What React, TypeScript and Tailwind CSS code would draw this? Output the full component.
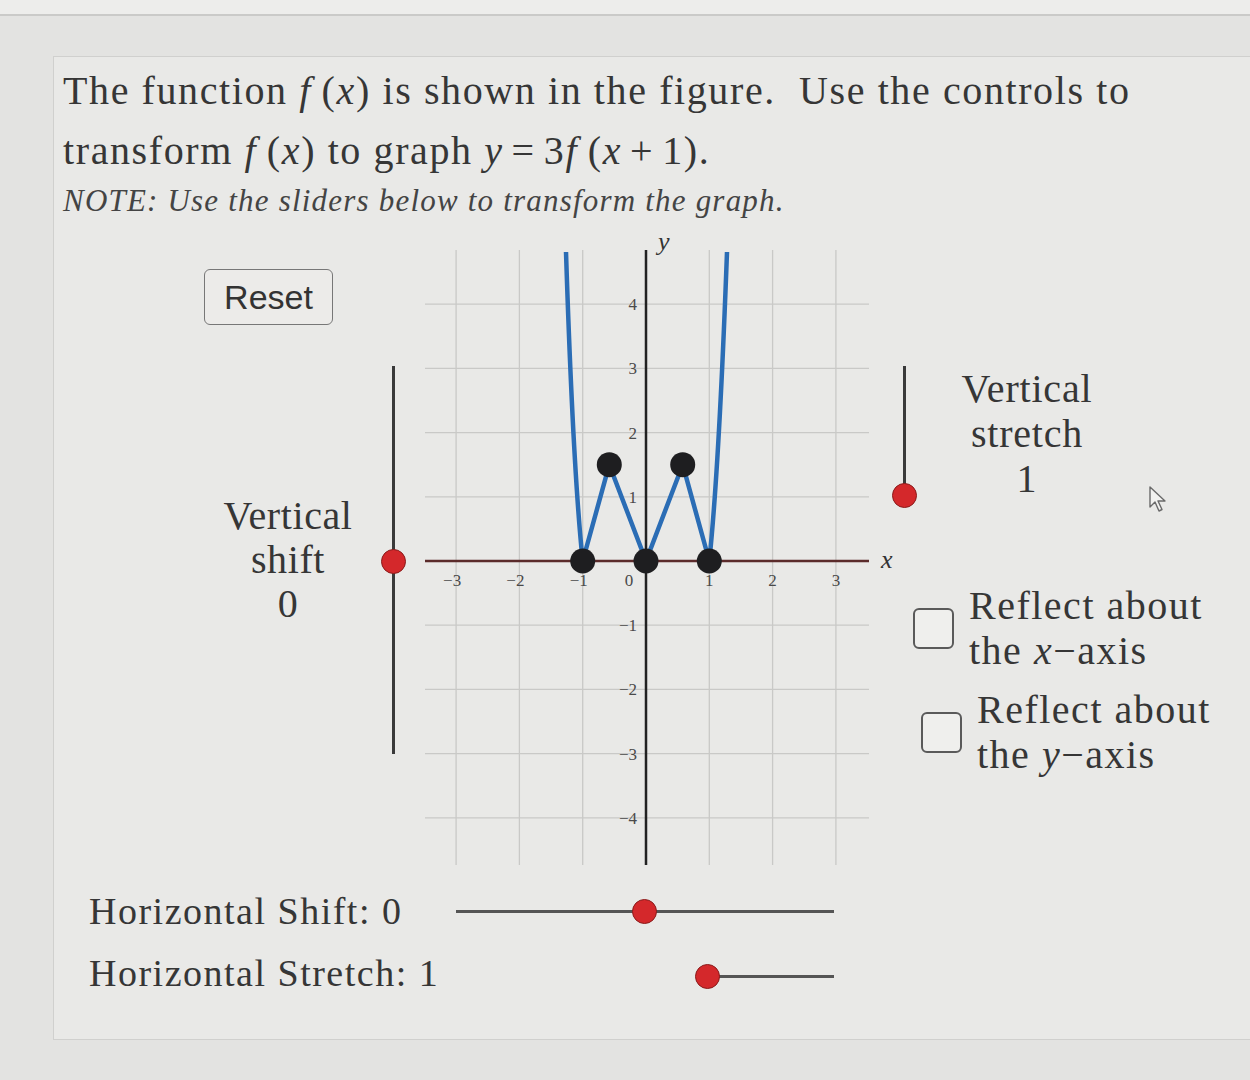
import React from "react";

const serif = { fontFamily: '"Liberation Serif", "Times New Roman", serif' };

function Graph() {
  const ox = 225;
  const oy = 333;
  const ux = 63.3;
  const uy = 64.2;
  const xs = [-3, -2, -1, 0, 1, 2, 3];
  const ys = [-4, -3, -2, -1, 0, 1, 2, 3, 4];
  const pts: [number, number][] = [
    [-1, 0],
    [-0.58, 1.5],
    [0, 0],
    [0.58, 1.5],
    [1, 0],
  ];
  const P = (x: number, y: number) => [ox + x * ux, oy - y * uy];
  return (
    <svg width="471" height="640" viewBox="0 0 471 640" className="overflow-visible" style={serif}>
      {xs.map((k) => (
        <line key={"gx" + k} x1={ox + k * ux} y1={22} x2={ox + k * ux} y2={637} stroke="#c9c9c7" strokeWidth="1.3" />
      ))}
      {ys.map((k) => (
        <line key={"gy" + k} x1={4} y1={oy - k * uy} x2={448} y2={oy - k * uy} stroke="#c9c9c7" strokeWidth="1.3" />
      ))}
      <line x1={4} y1={oy} x2={448} y2={oy} stroke="#5b2b2b" strokeWidth="2.5" />
      <line x1={ox} y1={22} x2={ox} y2={637} stroke="#222" strokeWidth="2.5" />
      {xs.map((k) =>
        k === 0 ? (
          <text key={"tx" + k} x={ox - 17} y={oy + 25} fontSize="17" fill="#4a4a4a" textAnchor="middle">0</text>
        ) : (
          <text key={"tx" + k} x={ox + k * ux - (k < 0 ? 4 : 0)} y={oy + 25} fontSize="17" fill="#4a4a4a" textAnchor="middle">
            {k < 0 ? "\u2212" + -k : k}
          </text>
        )
      )}
      {ys
        .filter((k) => k !== 0)
        .map((k) => (
          <text key={"ty" + k} x={ox - 9} y={oy - k * uy + 6} fontSize="17" fill="#4a4a4a" textAnchor="end">
            {k < 0 ? "\u2212" + -k : k}
          </text>
        ))}
      <text x={ox + 12} y={22} fontSize="26" fontStyle="italic" fill="#333">y</text>
      <text x={460} y={340} fontSize="26" fontStyle="italic" fill="#333">x</text>
      <path
        d={`M145 24 Q152 240 ${P(-1, 0)[0]} ${oy} L${P(-0.58, 1.5)[0]} ${P(-0.58, 1.5)[1]} L${ox} ${oy} L${P(0.58, 1.5)[0]} ${P(0.58, 1.5)[1]} L${P(1, 0)[0]} ${oy} Q298 240 306 24`}
        fill="none"
        stroke="#2b6db5"
        strokeWidth="4.5"
        strokeLinejoin="round"
      />
      {pts.map(([x, y], i) => {
        const [cx, cy] = P(x, y);
        return <circle key={i} cx={cx} cy={cy} r="12.5" fill="#1e1e20" />;
      })}
    </svg>
  );
}

function Dot() {
  return <div className="w-[25px] h-[25px] rounded-full bg-[#d4282b] border border-[#8a1b1b]" />;
}

function Checkbox() {
  return <div className="w-[41px] h-[41px] shrink-0 rounded-md border-2 border-[#5a5a5a] bg-[#efefed]" />;
}

export default function App() {
  return (
    <div className="w-[1250px] h-[1080px] bg-[#e3e3e1] overflow-hidden text-[#363636]" style={serif}>
      <div className="h-[16px] bg-[#ededeb] border-b-2 border-[#cacac8]" />
      <div className="relative ml-[53px] mt-[40px] w-[1210px] h-[984px] bg-[#e9e9e7] border border-[#d0d0ce] pl-[9px] pt-[4px]">
        <p className="text-[40px] leading-[60px] tracking-[1.6px] whitespace-nowrap">
          The function <i>f</i>&thinsp;(<i>x</i>) is shown in the figure.&nbsp; Use the controls to
          <br />
          transform <i>f</i>&thinsp;(<i>x</i>) to graph <i>y</i>
          <span className="mx-[8px]">=</span>3<i>f</i>&thinsp;(<i>x</i>
          <span className="mx-[8px]">+</span>1).
        </p>
        <p className="italic text-[31px] leading-[40px] tracking-[1.2px] text-[#444]">
          NOTE: Use the sliders below to transform the graph.
        </p>

        <div className="flex mt-[7px] h-[640px]">
          {/* left column */}
          <div className="w-[358px] flex flex-col">
            <button className="ml-[141px] mt-[41px] w-[129px] h-[56px] rounded-md border-[1.5px] border-[#777] bg-[#ecebe9] text-[34px] text-[#333] leading-none" style={{ fontFamily: '"Liberation Sans", Arial, sans-serif' }}>
              Reset
            </button>
            <div className="flex items-center mt-[41px] h-[388px]">
              <div className="ml-[130px] w-[190px] text-center text-[40px] leading-[44px] tracking-[0.6px]">
                Vertical
                <br />
                shift
                <br />0
              </div>
              <div className="relative -ml-[2px] w-[25px] h-[388px] flex justify-center">
                <div className="w-[3px] h-full bg-[#3a3a3a]" />
                <div className="absolute top-[183px] left-0">
                  <Dot />
                </div>
              </div>
            </div>
          </div>

          {/* graph */}
          <Graph />

          {/* right column */}
          <div className="flex flex-col">
            <div className="flex items-start mt-[138px]">
              <div className="relative w-[25px] h-[142px] flex justify-center">
                <div className="w-[3px] h-[130px] bg-[#3a3a3a]" />
                <div className="absolute top-[117px] left-0">
                  <Dot />
                </div>
              </div>
              <div className="w-[220px] text-center text-[40px] leading-[45px] tracking-[0.8px]">
                Vertical
                <br />
                stretch
                <br />1
              </div>
            </div>
            <div className="flex items-center mt-[75px] ml-[21px] gap-[15px]">
              <Checkbox />
              <div className="text-[40px] leading-[45px] tracking-[1.5px] whitespace-nowrap">
                Reflect about
                <br />
                the <i>x</i>&minus;axis
              </div>
            </div>
            <div className="flex items-center mt-[14px] ml-[29px] gap-[15px]">
              <Checkbox />
              <div className="text-[40px] leading-[45px] tracking-[1.5px] whitespace-nowrap">
                Reflect about
                <br />
                the <i>y</i>&minus;axis
              </div>
            </div>
          </div>
        </div>

        {/* horizontal sliders */}
        <div className="flex items-center mt-[18px] h-[50px]">
          <div className="ml-[26px] w-[367px] text-[38px] leading-[50px] tracking-[1.5px] whitespace-nowrap">Horizontal Shift: 0</div>
          <div className="relative w-[378px] h-[25px] flex items-center">
            <div className="w-full h-[3px] bg-[#555]" />
            <div className="absolute left-[176px] top-0">
              <Dot />
            </div>
          </div>
        </div>
        <div className="flex items-center mt-[12px] h-[50px]">
          <div className="ml-[26px] w-[618px] text-[38px] leading-[50px] tracking-[1.5px] whitespace-nowrap">Horizontal Stretch: 1</div>
          <div className="relative w-[127px] h-[25px] flex items-center mt-[6px]">
            <div className="w-full h-[3px] bg-[#555]" />
            <div className="absolute left-[-12px] top-0">
              <Dot />
            </div>
          </div>
        </div>

        {/* mouse cursor */}
        <svg className="absolute left-[1094px] top-[428px]" width="22" height="28" viewBox="0 0 22 28">
          <path d="M2 2 L2 22 L7 17 L11 26 L14 24.5 L10 16 L17 16 Z" fill="#f2f2f0" stroke="#6a6a6a" strokeWidth="1.4" strokeLinejoin="round" />
        </svg>
      </div>
    </div>
  );
}
